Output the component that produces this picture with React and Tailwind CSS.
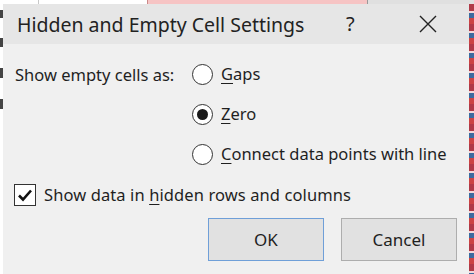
import React from "react";

function Radio({ checked }) {
  return (
    <span className="flex h-[21px] w-[21px] items-center justify-center rounded-full border border-[#333] bg-white">
      {checked && <span className="h-[11px] w-[11px] rounded-full bg-[#1a1a1a]" />}
    </span>
  );
}

function Option({ checked, accel, rest }) {
  return (
    <div className="flex h-[40px] items-center gap-[8px]">
      <Radio checked={checked} />
      <span>
        <span className="underline underline-offset-[3px] decoration-1">{accel}</span>
        {rest}
      </span>
    </div>
  );
}

export default function App() {
  return (
    <div
      className="flex h-[274px] w-[474px] flex-col overflow-hidden bg-white text-[#1a1a1a]"
      style={{ fontFamily: '"Noto Sans", "Open Sans", sans-serif' }}
    >
      {/* spreadsheet cells behind the dialog */}
      <div className="flex h-[4px] shrink-0">
        <div className="w-[39px] border-r border-[#c8c8c8] bg-white" />
        <div className="w-[108px] bg-white" />
        <div className="w-[220px] border-l border-[#c98a8a] bg-[#f6c4c4]" />
        <div className="flex-1 border-l border-[#999] bg-[#e0e0e0]" />
      </div>

      <div className="flex flex-1">
        <div className="flex w-[3px] flex-col gap-[6px] bg-white pt-[6px]">
          <div className="h-[8px] bg-[#444]" />
          <div className="h-[8px] bg-[#fff]" />
          <div className="h-[9px] bg-[#444]" />
          <div className="h-[9px] bg-[#fff]" />
          <div className="h-[10px] bg-[#444]" />
          <div className="h-[9px] bg-[#fff]" />
          <div className="h-[10px] bg-[#444]" />
        </div>

        {/* dialog */}
        <div className="flex w-[466px] flex-col bg-[#f0f0f0]">
          <div className="flex h-[40px] items-center bg-[#e6e6e6] pl-[14px] text-[19.5px] text-[#222]">
            <span className="flex-1 pt-[1px]">Hidden and Empty Cell Settings</span>
            <span className="w-[72px] text-[20px]">?</span>
            <svg width="20" height="20" viewBox="0 0 20 20" className="mr-[31px]">
              <path d="M2 2 L18 18 M18 2 L2 18" stroke="#222" strokeWidth="1.4" fill="none" />
            </svg>
          </div>

          <div className="flex flex-col px-[11px] text-[16.5px] text-[#1f1f1f]">
            <div className="mt-[10px] flex">
              <span className="w-[178px] pl-[1px] pt-[9px]">Show empty cells as:</span>
              <div className="flex flex-col">
                <Option accel="G" rest="aps" />
                <Option checked accel="Z" rest="ero" />
                <Option accel="C" rest="onnect data points with line" />
              </div>
            </div>

            <div className="mt-[9px] flex items-center gap-[8px]">
              <span className="flex h-[22px] w-[22px] items-center justify-center border border-[#333] bg-white">
                <svg width="16" height="16" viewBox="0 0 16 16">
                  <path d="M2 8.5 L6 12.5 L14 3.5" stroke="#111" strokeWidth="2.6" fill="none" />
                </svg>
              </span>
              <span className="tracking-[0.1px]">
                Show data in <span className="underline underline-offset-[3px] decoration-1">h</span>idden rows and columns
              </span>
            </div>

            <div className="mt-[10px] flex justify-end gap-[17px] pr-[1px]">
              <button className="h-[43px] w-[116px] border border-[#6f9fd8] bg-[#e1e1e1] text-[17px]">OK</button>
              <button className="h-[43px] w-[116px] border border-[#adadad] bg-[#e1e1e1] text-[17px]">Cancel</button>
            </div>
          </div>
        </div>

        <div
          className="flex-1"
          style={{ background: "repeating-linear-gradient(180deg,#b03a48 0 7px,#f2d6d8 7px 9px,#3b6aa0 9px 14px,#c44 14px 20px)" }}
        />
      </div>
    </div>
  );
}
